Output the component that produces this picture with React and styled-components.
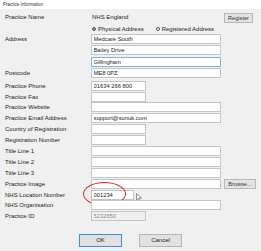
import React from "react";
import styled, { createGlobalStyle } from "styled-components";

const GlobalStyle = createGlobalStyle`
  html, body {
    margin: 0;
    padding: 0;
    background: #f0f0f0;
  }
  body {
    font-family: "Liberation Sans", Arial, sans-serif;
    color: #1b1b1b;
  }
`;

const Dialog = styled.div`
  width: 261px;
  height: 251px;
  background: #f0f0f0;
  overflow: hidden;
  position: relative;
`;

const TitleBar = styled.div`
  height: 9px;
  background: #ffffff;
  font-size: 4.5px;
  line-height: 9px;
  padding-left: 3px;
  color: #333;
`;

const Form = styled.div`
  display: flex;
  flex-direction: column;
  padding-left: 5px;
`;

const Row = styled.div`
  display: grid;
  grid-template-columns: 86px 1fr;
  align-items: ${(p) => (p.$top ? "start" : "center")};
  height: ${(p) => (p.$h ? p.$h + "px" : "auto")};
  margin-top: ${(p) => p.$mt || 0}px;
`;

const Label = styled.div`
  font-size: 6px;
  line-height: 10px;
  white-space: nowrap;
  color: ${(p) => (p.$dim ? "#555" : "#1b1b1b")};
`;

const Field = styled.div`
  display: flex;
  align-items: center;
  position: relative;
  padding-right: ${(p) => p.$pr || 0}px;
  justify-content: ${(p) => (p.$spread ? "space-between" : "flex-start")};
  gap: 3px;
`;

const Stack = styled.div`
  display: flex;
  flex-direction: column;
  gap: 1.3px;
`;

const Value = styled.span`
  font-size: 6px;
  padding-left: 1px;
`;

const Box = styled.input`
  box-sizing: border-box;
  width: ${(p) => p.$w || 130}px;
  height: 10px;
  margin: 0;
  padding: 0 0 0 1.5px;
  border: 1px solid ${(p) => (p.$focus ? "#7fb3e3" : "#c4c4c4")};
  background: ${(p) => (p.disabled ? "#f0f0f0" : "#ffffff")};
  font-family: "Liberation Sans", Arial, sans-serif;
  font-size: 5.8px;
  color: ${(p) => (p.disabled ? "#8c8c8c" : "#1b1b1b")};
  outline: none;
`;

const SmallButton = styled.div`
  box-sizing: border-box;
  width: ${(p) => p.$w}px;
  height: 10px;
  background: #e3e3e3;
  border: 1px solid #b8b8b8;
  font-size: 5.6px;
  line-height: 8px;
  text-align: center;
  color: #333;
`;

const RadioGroup = styled.div`
  display: flex;
  align-items: center;
  gap: 12px;
  font-size: 6px;
  padding-left: 1px;
`;

const RadioOption = styled.span`
  display: flex;
  align-items: center;
  gap: 2px;
`;

const RadioDot = styled.span`
  box-sizing: border-box;
  width: 4px;
  height: 4px;
  border-radius: 50%;
  border: 0.7px solid #555;
  background: ${(p) => (p.$on ? "radial-gradient(circle, #333 45%, #fff 55%)" : "#fff")};
`;

const Circle = styled.div`
  position: absolute;
  left: -8px;
  top: -7.5px;
  width: 41px;
  height: 22px;
  border: 1.4px solid #d8261f;
  border-radius: 50%;
  pointer-events: none;
`;

const Pointer = styled.svg`
  position: absolute;
  left: 45px;
  top: 3px;
`;

const Footer = styled.div`
  display: flex;
  justify-content: center;
  gap: 17px;
  margin-top: 12.5px;
`;

const DialogButton = styled.div`
  box-sizing: border-box;
  width: 43px;
  height: 13px;
  background: #e1e1e1;
  border: 1px solid ${(p) => (p.$primary ? "#3c8ddb" : "#b5b5b5")};
  font-size: 6px;
  line-height: 11px;
  text-align: center;
  color: #222;
`;

const rows = [
  { label: "Practice Phone", value: "01634 266 800", w: 55, mt: 2.7 },
  { label: "Practice Fax", value: "", w: 55 },
  { label: "Practice Website", value: "" },
  { label: "Practice Email Address", value: "support@sonuk.com" },
  { label: "Country of Registration", value: "", w: 55 },
  { label: "Registration Number", value: "", w: 55 },
  { label: "Title Line 1", value: "" },
  { label: "Title Line 2", value: "" },
  { label: "Title Line 3", value: "" },
];

const App = () => {
  return (
    <>
      <GlobalStyle />
      <Dialog>
        <TitleBar>Practice Information</TitleBar>
        <Form>
          <Row $h={15}>
            <Label>Practice Name</Label>
            <Field $spread $pr={8}>
              <Value>NHS England</Value>
              <SmallButton $w={29} style={{ marginTop: 2 }}>Register</SmallButton>
            </Field>
          </Row>
          <Row $h={10}>
            <div />
            <RadioGroup>
              <RadioOption>
                <RadioDot $on />
                Physical Address
              </RadioOption>
              <RadioOption>
                <RadioDot />
                Registered Address
              </RadioOption>
            </RadioGroup>
          </Row>
          <Row $top>
            <Label>Address</Label>
            <Stack>
              <Box readOnly defaultValue="Medcare South" />
              <Box readOnly defaultValue="Bailey Drive" />
              <Box readOnly defaultValue="Gillingham" $focus />
            </Stack>
          </Row>
          <Row $mt={1.4}>
            <Label>Postcode</Label>
            <Field>
              <Box readOnly defaultValue="ME8 0PZ" />
            </Field>
          </Row>
          {rows.map((r, i) => (
            <Row key={i} $mt={r.mt || 0.9}>
              <Label>{r.label}</Label>
              <Field>
                <Box readOnly defaultValue={r.value} $w={r.w} />
              </Field>
            </Row>
          ))}
          <Row $mt={0.9}>
            <Label>Practice Image</Label>
            <Field>
              <Box readOnly defaultValue="" />
              <SmallButton $w={32}>Browse...</SmallButton>
            </Field>
          </Row>
          <Row $mt={0.9}>
            <Label>NHS Location Number</Label>
            <Field>
              <Box readOnly defaultValue="001234" $w={43} />
              <Circle />
              <Pointer width="6" height="9" viewBox="0 0 12 18">
                <path
                  d="M1 1 L1 14 L4.5 10.5 L7 16.5 L9 15.5 L6.6 9.8 L11 9.8 Z"
                  fill="#fff"
                  stroke="#555"
                  strokeWidth="1.2"
                  strokeLinejoin="round"
                />
              </Pointer>
            </Field>
          </Row>
          <Row $mt={0.9}>
            <Label>NHS Organisation</Label>
            <Field>
              <Box readOnly defaultValue="" />
            </Field>
          </Row>
          <Row $mt={0.9}>
            <Label>Practice ID</Label>
            <Field>
              <Box disabled defaultValue="5232650" $w={55} />
            </Field>
          </Row>
        </Form>
        <Footer>
          <DialogButton $primary>OK</DialogButton>
          <DialogButton>Cancel</DialogButton>
        </Footer>
      </Dialog>
    </>
  );
};

export default App;
